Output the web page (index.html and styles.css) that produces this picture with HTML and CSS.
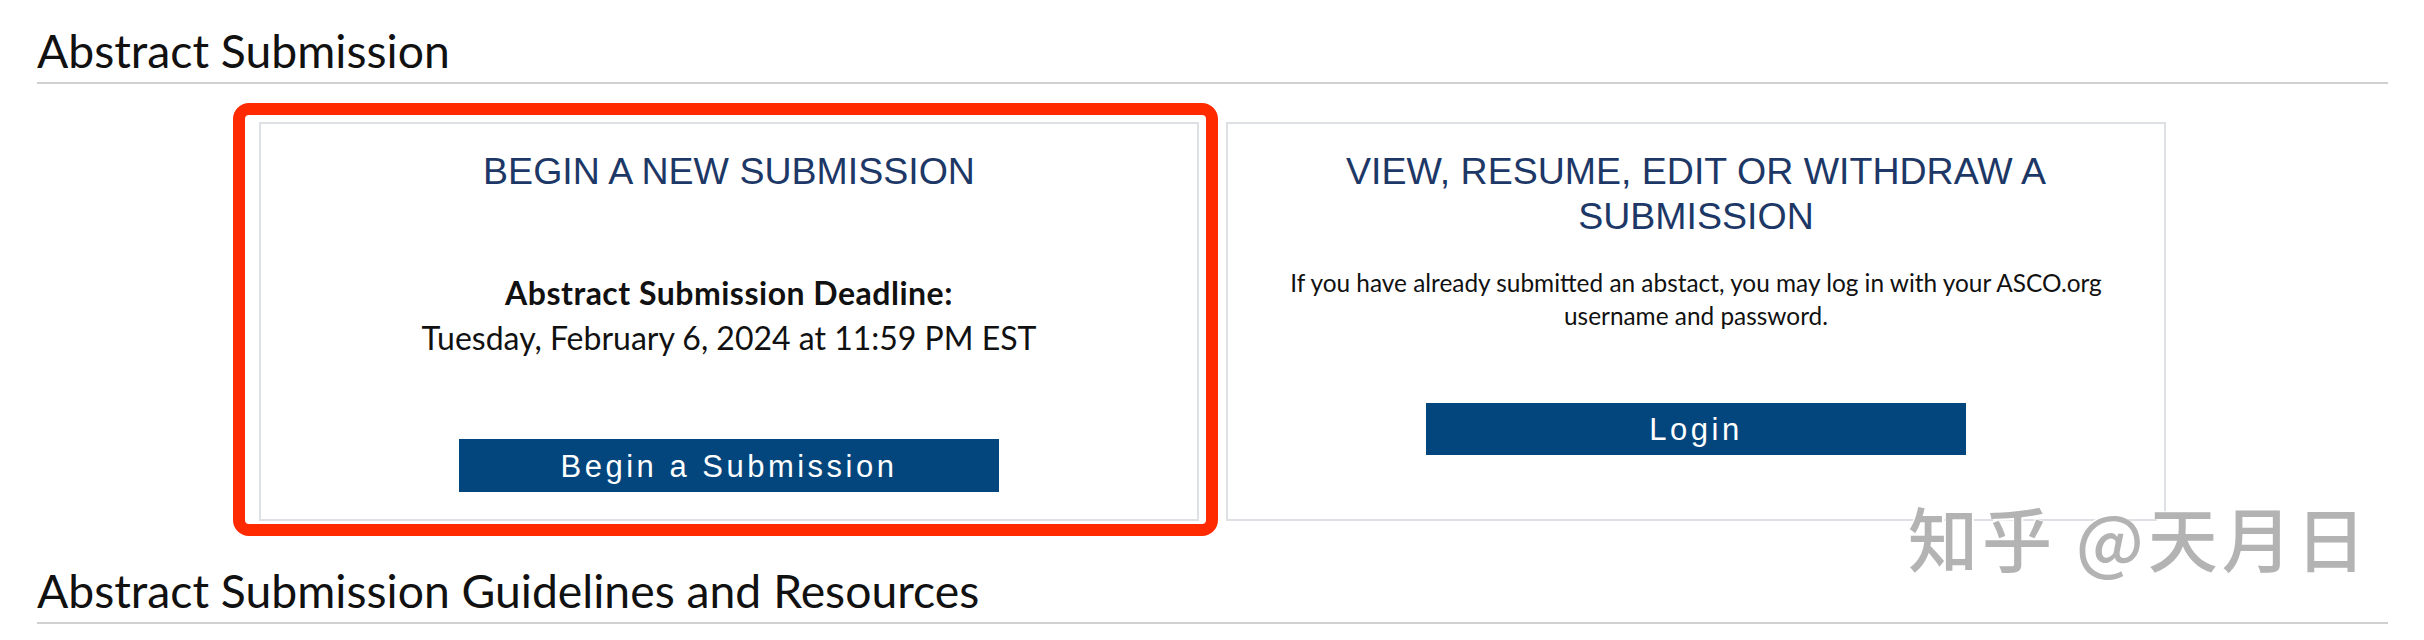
FILE: index.html
```html
<!DOCTYPE html>
<html lang="en">
<head>
<meta charset="utf-8">
<title>Abstract Submission</title>
<link rel="stylesheet" href="styles.css">
</head>
<body>
<main class="page">
  <section class="section">
    <h2 class="section-title">Abstract Submission</h2>
    <div class="cards">
      <div class="card card-highlighted">
        <h3 class="card-title">BEGIN A NEW SUBMISSION</h3>
        <p class="deadline"><strong>Abstract Submission Deadline:</strong><br>Tuesday, February 6, 2024 at 11:59 PM EST</p>
        <a class="btn" href="#">Begin a Submission</a>
        <span class="highlight-ring" aria-hidden="true"></span>
      </div>
      <div class="card">
        <h3 class="card-title">VIEW, RESUME, EDIT OR WITHDRAW A SUBMISSION</h3>
        <p class="card-text">If you have already submitted an abstact, you may log in with your ASCO.org<br>username and password.</p>
        <a class="btn btn-login" href="#">Login</a>
      </div>
    </div>
  </section>
  <section class="section section-next">
    <h2 class="section-title">Abstract Submission Guidelines and Resources</h2>
  </section>
  <div class="watermark" aria-hidden="true">知乎 @天月日</div>
</main>
</body>
</html>
```

FILE: styles.css
```css
html, body {
  margin: 0;
  padding: 0;
  background: #ffffff;
  overflow: hidden;
}

.page {
  position: relative;
  padding: 23px 36px 0 37px;
  font-family: "Lato", "Noto Sans", sans-serif;
  color: #111111;
}

.section-title {
  margin: 0;
  font-family: "Lato", "Noto Sans", sans-serif;
  font-weight: 400;
  font-size: 46.3px;
  line-height: 54px;
  color: #111111;
  padding-bottom: 5px;
  border-bottom: 2px solid #d0d0d0;
}

.cards {
  display: flex;
  justify-content: center;
  gap: 27px;
  margin-top: 38px;
}

.card {
  position: relative;
  width: 940px;
  box-sizing: border-box;
  border: 2px solid #dde1e6;
  padding: 25px 30px 27px;
  display: flex;
  flex-direction: column;
  align-items: center;
  text-align: center;
}

.card-title {
  margin: 0;
  padding: 0 20px;
  font-family: "Liberation Sans", Arial, sans-serif;
  font-weight: 400;
  font-size: 37.5px;
  line-height: 45px;
  color: #1d3866;
}

.deadline {
  margin: 76px 0 0;
  font-size: 32px;
  line-height: 45px;
  color: #111111;
}

.deadline strong {
  font-weight: 700;
  letter-spacing: 0.5px;
}

.card-text {
  margin: 27px 0 0;
  font-size: 24.4px;
  line-height: 33px;
  color: #111111;
}

.btn {
  display: block;
  width: 540px;
  height: 53px;
  margin-top: 79px;
  background: #02467d;
  color: #ffffff;
  text-decoration: none;
  font-family: "Liberation Sans", Arial, sans-serif;
  font-size: 31px;
  line-height: 55px;
  letter-spacing: 3.5px;
}

.btn-login {
  margin-top: 71px;
  height: 52px;
  line-height: 54px;
}

.highlight-ring {
  position: absolute;
  top: -21px;
  left: -28px;
  right: -21px;
  bottom: -17px;
  border: 12px solid #ff2a00;
  border-radius: 16px;
  pointer-events: none;
}

.section-next {
  margin-top: 42px;
}

.watermark {
  position: absolute;
  left: 1908px;
  top: 502px;
  font-family: "Noto Sans CJK SC", sans-serif;
  font-weight: 500;
  font-size: 70px;
  letter-spacing: 4px;
  line-height: 1;
  color: rgba(160, 160, 160, 0.8);
  text-shadow: 2px 2px 0 #ffffff, -1px -1px 0 #ffffff;
  white-space: nowrap;
  pointer-events: none;
}
```
